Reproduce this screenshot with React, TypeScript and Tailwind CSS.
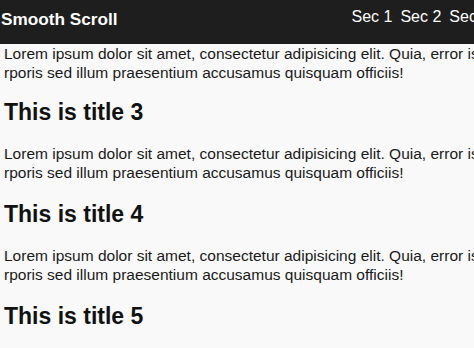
import React from "react";

export default function App() {
  const line1 = "Lorem ipsum dolor sit amet, consectetur adipisicing elit. Quia, error is";
  const line2 = "rporis sed illum praesentium accusamus quisquam officiis!";
  const Para = () => (
    <div className="flex flex-col text-[15.5px] leading-[19px] text-[#1a1a1a] whitespace-nowrap">
      <span>{line1}</span>
      <span>{line2}</span>
    </div>
  );
  return (
    <div className="w-[474px] h-[348px] overflow-hidden bg-[#f9f9f9] font-['Liberation_Sans',Arial,sans-serif]">
      <header className="h-[44px] bg-[#1e1e1e] flex items-start whitespace-nowrap text-white">
        <div className="pt-[9px] pl-[1px] shrink-0 font-bold text-[17.2px] leading-[20px]">Smooth Scroll</div>
        <nav className="pt-[8px] ml-[234px] shrink-0 flex gap-[8px] text-[16px] leading-[18px]">
          <span>Sec 1</span>
          <span>Sec 2</span>
          <span>Sec 3</span>
        </nav>
      </header>
      <main className="flex flex-col px-[4px]">
        <Para />
        <h2 className="mt-[17px] mb-[19px] text-[23px] leading-[26px] font-bold text-[#111]">This is title 3</h2>
        <Para />
        <h2 className="mt-[19px] mb-[19px] text-[23px] leading-[26px] font-bold text-[#111]">This is title 4</h2>
        <Para />
        <h2 className="mt-[19px] mb-[19px] text-[23px] leading-[26px] font-bold text-[#111]">This is title 5</h2>
        <Para />
      </main>
    </div>
  );
}
